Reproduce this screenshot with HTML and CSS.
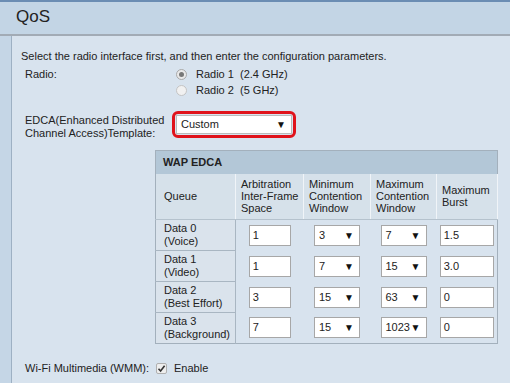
FILE: index.html
```html
<!DOCTYPE html>
<html lang="en">
<head>
    <meta charset="UTF-8">
    <title>QoS</title>
    <link rel="stylesheet" href="styles.css">
</head>
<body>
    <div class="page">
        <div class="header"><h1>QoS</h1></div>
        <div class="main">
            <div class="side"></div>
            <div class="content">
                <p class="intro">Select the radio interface first, and then enter the configuration parameters.</p>
                <div class="row radio-row">
                    <div class="label">Radio:</div>
                    <div class="radios">
                        <label class="radio"><span class="dot on"></span>Radio 1&nbsp; (2.4 GHz)</label>
                        <label class="radio"><span class="dot"></span>Radio 2&nbsp; (5 GHz)</label>
                    </div>
                </div>
                <div class="row tpl-row">
                    <div class="label tpl-label">EDCA(Enhanced Distributed<br>Channel Access)Template:</div>
                    <div class="hilite">
                        <div class="select big">Custom<span class="arrow">&#9660;</span></div>
                    </div>
                </div>
                <table class="edca">
                    <tr class="title"><th colspan="5">WAP EDCA</th></tr>
                    <tr class="cols">
                        <th class="q">Queue</th>
                        <th>Arbitration<br>Inter-Frame<br>Space</th>
                        <th>Minimum<br>Contention<br>Window</th>
                        <th>Maximum<br>Contention<br>Window</th>
                        <th>Maximum<br>Burst</th>
                    </tr>
                    <tr>
                        <td class="q">Data 0<br>(Voice)</td>
                        <td><div class="field">1</div></td>
                        <td><div class="select">3<span class="arrow">&#9660;</span></div></td>
                        <td><div class="select">7<span class="arrow">&#9660;</span></div></td>
                        <td><div class="field wide">1.5</div></td>
                    </tr>
                    <tr>
                        <td class="q">Data 1<br>(Video)</td>
                        <td><div class="field">1</div></td>
                        <td><div class="select">7<span class="arrow">&#9660;</span></div></td>
                        <td><div class="select">15<span class="arrow">&#9660;</span></div></td>
                        <td><div class="field wide">3.0</div></td>
                    </tr>
                    <tr>
                        <td class="q">Data 2<br>(Best Effort)</td>
                        <td><div class="field">3</div></td>
                        <td><div class="select">15<span class="arrow">&#9660;</span></div></td>
                        <td><div class="select">63<span class="arrow">&#9660;</span></div></td>
                        <td><div class="field wide">0</div></td>
                    </tr>
                    <tr>
                        <td class="q">Data 3<br>(Background)</td>
                        <td><div class="field">7</div></td>
                        <td><div class="select">15<span class="arrow">&#9660;</span></div></td>
                        <td><div class="select">1023<span class="arrow">&#9660;</span></div></td>
                        <td><div class="field wide">0</div></td>
                    </tr>
                </table>
                <div class="row wmm-row">
                    <div class="label wmm-label">Wi-Fi Multimedia (WMM):</div>
                    <label class="check">
                        <span class="box"><svg width="9" height="9" viewBox="0 0 9 9"><path d="M1.5 4.8 L3.6 7 L7.6 1.8" fill="none" stroke="#333" stroke-width="1.6"/></svg></span>Enable
                    </label>
                </div>
            </div>
        </div>
    </div>
</body>
</html>
```

FILE: styles.css
```css
* { margin: 0; padding: 0; box-sizing: border-box; }
html, body { height: 100%; }
body {
    font-family: "Liberation Sans", Arial, sans-serif;
    font-size: 11px;
    color: #222;
    background: #d8e3ee;
}
.page {
    height: 100%;
    display: flex;
    flex-direction: column;
    border-top: 2px solid #6b8db3;
}
.header {
    height: 34px;
    background: #c3d5e5;
    border-bottom: 2px solid #a2abb5;
    padding: 0 0 3px 16px;
    display: flex;
    align-items: center;
}
.header h1 {
    font-size: 17px;
    font-weight: normal;
    color: #222;
}
.main { flex: 1; display: flex; }
.side {
    width: 12px;
    background: #c5d6e6;
    border-right: 1px solid #9db0c3;
}
.content {
    flex: 1;
    background: #d8e3ee;
    padding: 13px 0 0 9px;
}
.intro { line-height: 14px; }
.row { display: flex; align-items: flex-start; padding-left: 4px; }
.label { width: 151px; }
.radio-row { margin-top: 3px; line-height: 16px; }
.radios { display: flex; flex-direction: column; }
.radio { display: flex; align-items: center; }
.dot {
    width: 11px; height: 11px;
    border-radius: 50%;
    border: 1px solid #c4c4c4;
    background: #f1f1f1;
    margin-right: 9px;
    position: relative;
}
.dot.on { border-color: #a9a9a9; background: #e9e9e9; }
.dot.on::after {
    content: "";
    position: absolute;
    left: 2px; top: 2px;
    width: 5px; height: 5px;
    border-radius: 50%;
    background: #777;
}
.tpl-row { margin-top: 15px; }
.tpl-label { width: 147px; line-height: 13px; padding-top: 1px; }
.hilite {
    border: 3px solid #e0131b;
    border-radius: 6px;
    padding: 1px;
    margin-top: -2px;
}
.select {
    position: relative;
    background: #fff;
    border: 1px solid #a7a7a7;
    height: 21px;
    width: 46px;
    padding-left: 4px;
    line-height: 19px;
}
.select.big { width: 116px; height: 19px; line-height: 17px; border-color: #bbb; }
.arrow {
    position: absolute;
    right: 5px; top: 0;
    font-size: 10px;
    color: #111;
}
.edca {
    margin: 10px 0 0 134px;
    border-collapse: collapse;
    border: 1px solid #a3b0bc;
    width: 343px;
}
.edca th { font-weight: normal; }
.edca .title th {
    background: #b3c7d7;
    text-align: left;
    font-weight: bold;
    height: 23px;
    padding-left: 7px;
}
.edca .cols th {
    background: #d6e1ea;
    height: 46px;
    line-height: 12px;
    border-right: 1px solid #f0f4f8;
    border-left: 1px solid #b5c2cd;
    border-bottom: 1px solid #b5c2cd;
    text-align: left;
    padding-left: 5px;
}
.edca .cols th:first-child { border-left: none; }
.edca .cols th.q { padding-left: 8px; }
.edca td {
    height: 31px;
    vertical-align: middle;
    text-align: center;
}
.edca td.q {
    background: #dae3ec;
    text-align: left;
    padding-left: 8px;
    line-height: 13px;
    border-bottom: 1px solid #a9b6c2;
    border-right: 1px solid #a9b6c2;
    width: 80px;
}
.edca tr:last-child td.q { border-bottom: none; }
.edca td:nth-child(2) { width: 68px; }
.edca td:nth-child(3) { width: 67px; }
.edca td:nth-child(4) { width: 66px; }
.field {
    background: #fff;
    border: 1px solid #a7a7a7;
    width: 42px;
    height: 21px;
    line-height: 19px;
    padding-left: 3px;
    text-align: left;
    margin: 0 auto;
}
.field.wide { width: 54px; }
.edca .select { margin: 0 auto; text-align: left; }
.wmm-row { margin-top: 18px; align-items: center; }
.wmm-label { width: 131px; }
.check { display: flex; align-items: center; }
.box {
    width: 11px; height: 11px;
    border: 1px solid #b0b0b0;
    background: #eee;
    border-radius: 2px;
    margin-right: 7px;
    display: flex;
    align-items: center;
    justify-content: center;
}
```
